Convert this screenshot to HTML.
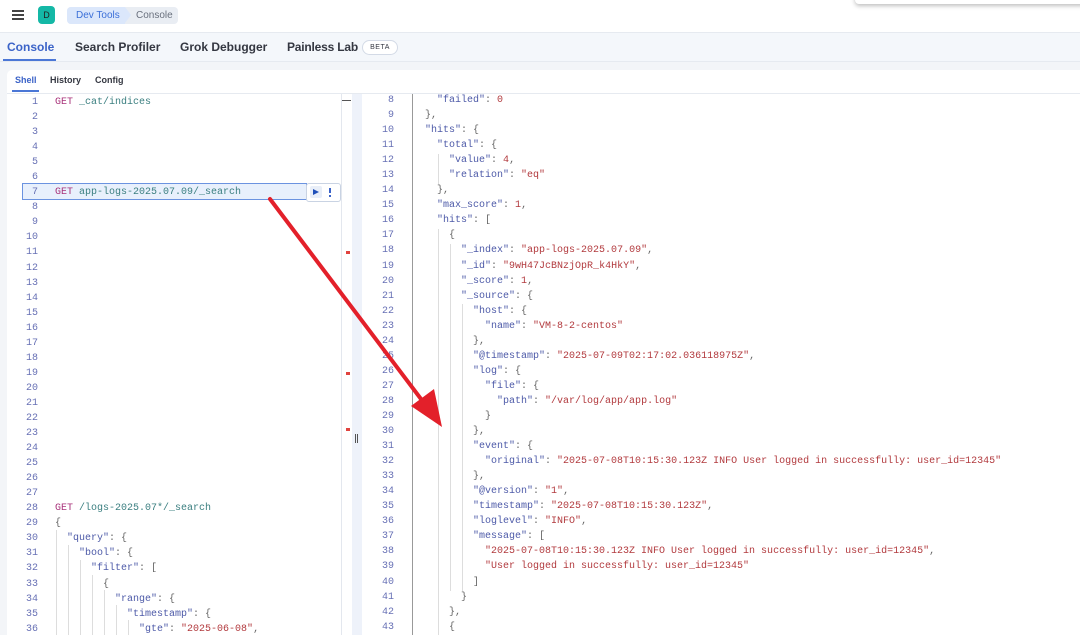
<!DOCTYPE html>
<html><head><meta charset="utf-8"><style>
*{margin:0;padding:0;box-sizing:border-box}
body{width:1080px;height:635px;overflow:hidden;background:#fff;font-family:"Liberation Sans",sans-serif;position:relative}
.abs{position:absolute}
pre{font-family:"Liberation Mono",monospace;font-size:10px;line-height:15.05px;white-space:pre}
.k{color:#4d5aa8}.s{color:#b23a3e}.p{color:#666}.g{color:#a8327a}.u{color:#3b7f80}
.ln{color:#6770b5;text-align:right}
.tab{font-size:12px;color:#343741;font-weight:bold}
</style></head><body>
<div class="abs" style="left:12px;top:10px;width:12px;height:2px;background:#444;box-shadow:0 4px 0 #444,0 8px 0 #444"></div>
<div class="abs" style="left:38px;top:6px;width:17px;height:18px;border-radius:4px;background:#14b8a6;color:#222;font-size:9px;text-align:center;line-height:18px">D</div>
<div class="abs" style="left:67px;top:7px;width:111px;height:17px;border-radius:4px;background:#e9edf3"></div>
<div class="abs" style="left:67px;top:7px;width:58px;height:17px;border-radius:4px 0 0 4px;background:#dbe7fb"></div>
<div class="abs" style="left:125px;top:7px;width:0;height:0;border-top:8.5px solid transparent;border-bottom:8.5px solid transparent;border-left:6px solid #dbe7fb"></div>
<div class="abs" style="left:76px;top:10px;font-size:10px;color:#3b6fd8">Dev Tools</div>
<div class="abs" style="left:136px;top:10px;font-size:10px;color:#69707d">Console</div>
<div class="abs" style="left:855px;top:-10px;width:240px;height:14px;background:#fff;box-shadow:0 2px 4px rgba(0,0,0,.25);border-radius:4px"></div>
<div class="abs" style="left:0;top:32px;width:1080px;height:30px;background:#f4f7fb;border-top:1px solid #e6eaf0;border-bottom:1px solid #e6eaf0"></div>
<div class="abs tab" style="left:7px;top:40px;color:#3b63c8">Console</div>
<div class="abs" style="left:3px;top:59px;width:53px;height:2px;background:#4b77d6"></div>
<div class="abs tab" style="left:75px;top:40px">Search Profiler</div>
<div class="abs tab" style="left:180px;top:40px">Grok Debugger</div>
<div class="abs tab" style="left:287px;top:40px;letter-spacing:-0.2px">Painless Lab</div>
<div class="abs" style="left:362px;top:40px;width:36px;height:15px;border:1px solid #d3dae6;border-radius:8px;font-size:7px;color:#343741;text-align:center;line-height:13px;letter-spacing:.5px;background:#fff">BETA</div>
<div class="abs" style="left:0;top:62px;width:1080px;height:573px;background:#f3f5f8"></div>
<div class="abs" style="left:7px;top:70px;width:1073px;height:565px;background:#fff;border-radius:5px 0 0 0"></div>
<div class="abs" style="left:15px;top:75px;font-size:9px;color:#3b63c8;font-weight:bold">Shell</div>
<div class="abs" style="left:12px;top:90px;width:27px;height:2px;background:#4b77d6"></div>
<div class="abs" style="left:50px;top:75px;font-size:9px;color:#343741;font-weight:bold">History</div>
<div class="abs" style="left:95px;top:75px;font-size:9px;color:#343741;font-weight:bold">Config</div>
<div class="abs" style="left:7px;top:93px;width:1073px;height:1px;background:#e6eaf0"></div>
<div class="abs" style="left:341px;top:94px;width:1px;height:541px;background:#e3e7ee"></div>
<div class="abs" style="left:352px;top:94px;width:10px;height:541px;background:#eef2fa"></div>
<div class="abs" style="left:342px;top:100px;width:9px;height:1px;background:#555"></div>
<div class="abs" style="left:355px;top:434px;width:1px;height:9px;background:#555;box-shadow:2px 0 0 #555"></div>
<div class="abs" style="left:346px;top:251px;width:4px;height:3px;background:#e0433f"></div>
<div class="abs" style="left:346px;top:372px;width:4px;height:3px;background:#e0433f"></div>
<div class="abs" style="left:346px;top:428px;width:4px;height:3px;background:#e0433f"></div>
<div class="abs" style="left:412px;top:94px;width:1px;height:541px;background:#999"></div>
<div class="abs" style="left:22px;top:183px;width:285px;height:17px;background:#e8f0fc;border:1px solid #6b93e0"></div>
<div class="abs" style="left:306px;top:183px;width:35px;height:19px;background:#fff;border:1px solid #c9d3e3;border-radius:3px"></div>
<div class="abs" style="left:310px;top:186px;width:12px;height:12px;background:#e8eef8;border-radius:2px"></div>
<div class="abs" style="left:313px;top:189px;width:0;height:0;border-top:3.5px solid transparent;border-bottom:3.5px solid transparent;border-left:6px solid #1f4fb8"></div>
<div class="abs" style="left:329px;top:188px;width:2px;height:5px;background:#3b63c8"></div>
<div class="abs" style="left:329px;top:195px;width:2px;height:2px;background:#3b63c8"></div>
<pre class="abs ln" style="left:14px;top:95px;width:24px">1
2
3
4
5
6
7
8
9
10
11
12
13
14
15
16
17
18
19
20
21
22
23
24
25
26
27
28
29
30
31
32
33
34
35
36</pre>
<pre class="abs" style="left:55px;top:95px"><span class="g">GET</span> <span class="u">_cat/indices</span>





<span class="g">GET</span> <span class="u">app-logs-2025.07.09/_search</span>




















<span class="g">GET</span> <span class="u">/logs-2025.07*/_search</span>
<span class="p">{</span>
  <span class="k">"query"</span><span class="p">: {</span>
    <span class="k">"bool"</span><span class="p">: {</span>
      <span class="k">"filter"</span><span class="p">: [</span>
        <span class="p">{</span>
          <span class="k">"range"</span><span class="p">: {</span>
            <span class="k">"timestamp"</span><span class="p">: {</span>
              <span class="k">"gte"</span><span class="p">: </span><span class="s">"2025-06-08"</span><span class="p">,</span></pre>
<div class="abs" style="left:56px;top:530px;width:1px;height:105px;background:#ddd"></div>
<div class="abs" style="left:68px;top:545px;width:1px;height:90px;background:#ddd"></div>
<div class="abs" style="left:80px;top:560px;width:1px;height:75px;background:#ddd"></div>
<div class="abs" style="left:92px;top:575px;width:1px;height:60px;background:#ddd"></div>
<div class="abs" style="left:104px;top:590px;width:1px;height:45px;background:#ddd"></div>
<div class="abs" style="left:116px;top:605px;width:1px;height:30px;background:#ddd"></div>
<div class="abs" style="left:128px;top:620px;width:1px;height:15px;background:#ddd"></div>
<pre class="abs ln" style="left:368px;top:93px;width:26px">8
9
10
11
12
13
14
15
16
17
18
19
20
21
22
23
24
25
26
27
28
29
30
31
32
33
34
35
36
37
38
39
40
41
42
43</pre>
<div class="abs" style="left:438px;top:229px;width:1px;height:406px;background:#ddd"></div>
<div class="abs" style="left:450px;top:244px;width:1px;height:347px;background:#ddd"></div>
<div class="abs" style="left:462px;top:304px;width:1px;height:287px;background:#ddd"></div>
<div class="abs" style="left:438px;top:154px;width:1px;height:30px;background:#ddd"></div>
<pre class="abs" style="left:413px;top:93px">    <span class="k">"failed"</span><span class="p">: </span><span class="s">0</span>
  <span class="p">},</span>
  <span class="k">"hits"</span><span class="p">: {</span>
    <span class="k">"total"</span><span class="p">: {</span>
      <span class="k">"value"</span><span class="p">: </span><span class="s">4</span><span class="p">,</span>
      <span class="k">"relation"</span><span class="p">: </span><span class="s">"eq"</span>
    <span class="p">},</span>
    <span class="k">"max_score"</span><span class="p">: </span><span class="s">1</span><span class="p">,</span>
    <span class="k">"hits"</span><span class="p">: [</span>
      <span class="p">{</span>
        <span class="k">"_index"</span><span class="p">: </span><span class="s">"app-logs-2025.07.09"</span><span class="p">,</span>
        <span class="k">"_id"</span><span class="p">: </span><span class="s">"9wH47JcBNzjOpR_k4HkY"</span><span class="p">,</span>
        <span class="k">"_score"</span><span class="p">: </span><span class="s">1</span><span class="p">,</span>
        <span class="k">"_source"</span><span class="p">: {</span>
          <span class="k">"host"</span><span class="p">: {</span>
            <span class="k">"name"</span><span class="p">: </span><span class="s">"VM-8-2-centos"</span>
          <span class="p">},</span>
          <span class="k">"@timestamp"</span><span class="p">: </span><span class="s">"2025-07-09T02:17:02.036118975Z"</span><span class="p">,</span>
          <span class="k">"log"</span><span class="p">: {</span>
            <span class="k">"file"</span><span class="p">: {</span>
              <span class="k">"path"</span><span class="p">: </span><span class="s">"/var/log/app/app.log"</span>
            <span class="p">}</span>
          <span class="p">},</span>
          <span class="k">"event"</span><span class="p">: {</span>
            <span class="k">"original"</span><span class="p">: </span><span class="s">"2025-07-08T10:15:30.123Z INFO User logged in successfully: user_id=12345"</span>
          <span class="p">},</span>
          <span class="k">"@version"</span><span class="p">: </span><span class="s">"1"</span><span class="p">,</span>
          <span class="k">"timestamp"</span><span class="p">: </span><span class="s">"2025-07-08T10:15:30.123Z"</span><span class="p">,</span>
          <span class="k">"loglevel"</span><span class="p">: </span><span class="s">"INFO"</span><span class="p">,</span>
          <span class="k">"message"</span><span class="p">: [</span>
            <span class="s">"2025-07-08T10:15:30.123Z INFO User logged in successfully: user_id=12345"</span><span class="p">,</span>
            <span class="s">"User logged in successfully: user_id=12345"</span>
          <span class="p">]</span>
        <span class="p">}</span>
      <span class="p">},</span>
      <span class="p">{</span></pre>
<svg class="abs" style="left:0;top:0" width="1080" height="635">
<line x1="270" y1="199" x2="424" y2="403" stroke="#e3202a" stroke-width="4" stroke-linecap="round"/>
<polygon points="442,427 411,406 434,389" fill="#e3202a"/>
</svg>
</body></html>
